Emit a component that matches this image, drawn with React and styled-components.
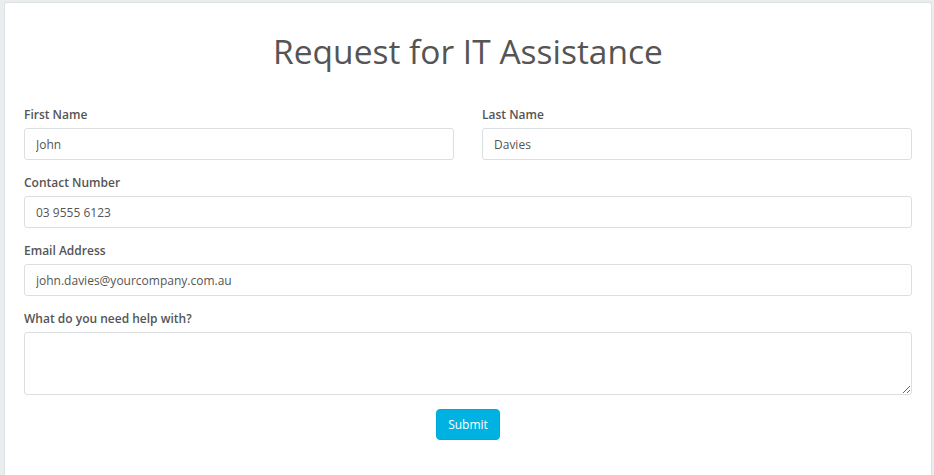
import styled, { createGlobalStyle } from "styled-components";

// Global

const GlobalStyle = createGlobalStyle`
  html, body {
    margin: 0;
    padding: 0;
    background: #e9edee;
    font-family: "Open Sans", "Liberation Sans", sans-serif;
  }
  * {
    box-sizing: border-box;
  }
`;

// Component

function App() {
  return (
    <>
      <GlobalStyle />
      <Card>
        <Title>Request for IT Assistance</Title>
        <Form onSubmit={(e) => e.preventDefault()}>
          <Row>
            <Field>
              <Label htmlFor="first">First Name</Label>
              <Input id="first" defaultValue="John" />
            </Field>
            <Field>
              <Label htmlFor="last">Last Name</Label>
              <Input id="last" defaultValue="Davies" />
            </Field>
          </Row>
          <Field>
            <Label htmlFor="phone">Contact Number</Label>
            <Input id="phone" defaultValue="03 9555 6123" />
          </Field>
          <Field>
            <Label htmlFor="email">Email Address</Label>
            <Input id="email" defaultValue="john.davies@yourcompany.com.au" />
          </Field>
          <Field>
            <Label htmlFor="help">What do you need help with?</Label>
            <TextArea id="help" />
          </Field>
          <Actions>
            <SubmitButton type="submit">Submit</SubmitButton>
          </Actions>
        </Form>
      </Card>
    </>
  );
}

export default App;

// Style

const Card = styled.main`
  margin: 2px 2px 0 4px;
  min-height: 473px;
  background: #fff;
  border: 1px solid #dde2e4;
  border-bottom: none;
  border-radius: 3px 3px 0 0;
  padding: 30px 19px 20px;
`;

const Title = styled.h1`
  margin: 0 0 36px;
  text-align: center;
  font-weight: 400;
  font-size: 33.5px;
  line-height: 37px;
  color: #555;
`;

const Form = styled.form`
  display: flex;
  flex-direction: column;
  gap: 14px;
`;

const Row = styled.div`
  display: grid;
  grid-template-columns: 1fr 1fr;
  column-gap: 28px;
`;

const Field = styled.div`
  display: flex;
  flex-direction: column;
  gap: 4px;
`;

const Label = styled.label`
  font-size: 12px;
  line-height: 18px;
  font-weight: 600;
  color: #555;
`;

const Input = styled.input`
  height: 32px;
  padding: 0 11px;
  border: 1px solid #dcdfe2;
  border-radius: 3px;
  font-family: inherit;
  font-size: 12px;
  color: #555;
  background: #fff;
  outline: none;
`;

const TextArea = styled.textarea`
  height: 63px;
  padding: 6px 11px;
  border: 1px solid #dcdfe2;
  border-radius: 3px;
  font-family: inherit;
  font-size: 12px;
  color: #555;
  resize: vertical;
  outline: none;
`;

const Actions = styled.div`
  display: flex;
  justify-content: center;
`;

const SubmitButton = styled.button`
  height: 31px;
  padding: 0 11px;
  border: 1px solid #00a9d9;
  border-radius: 4px;
  background: #00b2e2;
  color: #fff;
  font-family: inherit;
  font-size: 12px;
  cursor: pointer;
`;
